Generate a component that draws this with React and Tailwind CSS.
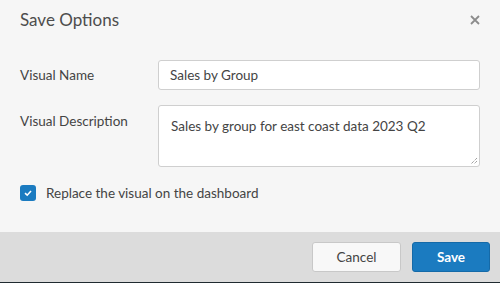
import React from "react";

export default function App() {
  return (
    <div className="w-[500px] h-[283px] bg-[#1f2a30] overflow-hidden" style={{ fontFamily: "Lato, 'Noto Sans', sans-serif" }}>
      <div className="w-[500px] h-[282px] bg-[#f6f6f6] flex flex-col">
        <div className="h-[40px] flex items-center justify-between pl-[20px] pr-[20px]">
          <div className="text-[17px] text-[#4d4d4d]">Save Options</div>
          <svg width="10" height="10" viewBox="0 0 10 10">
            <path d="M1 1 L9 9 M9 1 L1 9" stroke="#8c8c8c" strokeWidth="1.8" />
          </svg>
        </div>
        <div className="flex-1 flex flex-col px-[20px] pt-[20px]">
          <div className="flex items-center h-[30px]">
            <div className="w-[138px] text-[13.5px] text-[#444]">Visual Name</div>
            <div className="w-[322px] h-[30px] bg-white border border-[#cfcfcf] rounded-[3px] flex items-center px-[11px] text-[13.5px] text-[#444]">Sales by Group</div>
          </div>
          <div className="flex mt-[15px]">
            <div className="w-[138px] text-[13.5px] text-[#444] pt-[6px]">Visual Description</div>
            <div className="relative w-[322px] h-[62px] bg-white border border-[#cfcfcf] rounded-[3px] px-[12px] pt-[10px] text-[13.5px] text-[#444]">
              Sales by group for east coast data 2023 Q2
              <svg width="8" height="8" viewBox="0 0 8 8" className="absolute right-[1px] bottom-[1px]">
                <path d="M7 1 L1 7 M7 4 L4 7" stroke="#555" strokeWidth="0.8" strokeDasharray="1 1" />
              </svg>
            </div>
          </div>
          <div className="flex items-center mt-[16px]">
            <div className="w-[16px] h-[16px] rounded-[3px] bg-[#1b7bc0] flex items-center justify-center">
              <svg width="10" height="10" viewBox="0 0 10 10">
                <path d="M2 5.2 L4.2 7.2 L8 3" stroke="white" strokeWidth="1.6" fill="none" />
              </svg>
            </div>
            <div className="ml-[10px] text-[13.5px] text-[#444]">Replace the visual on the dashboard</div>
          </div>
        </div>
        <div className="h-[50px] bg-[#dcdcdc] flex items-center justify-end gap-[11px] pr-[10px]">
          <button className="w-[89px] h-[30px] bg-[#f8f8f8] border border-[#c8c8c8] rounded-[3px] text-[13.5px] text-[#444]">Cancel</button>
          <button className="w-[78px] h-[30px] bg-[#1b7bc0] border border-[#156aa8] rounded-[3px] text-[13.5px] text-white font-bold">Save</button>
        </div>
      </div>
    </div>
  );
}
